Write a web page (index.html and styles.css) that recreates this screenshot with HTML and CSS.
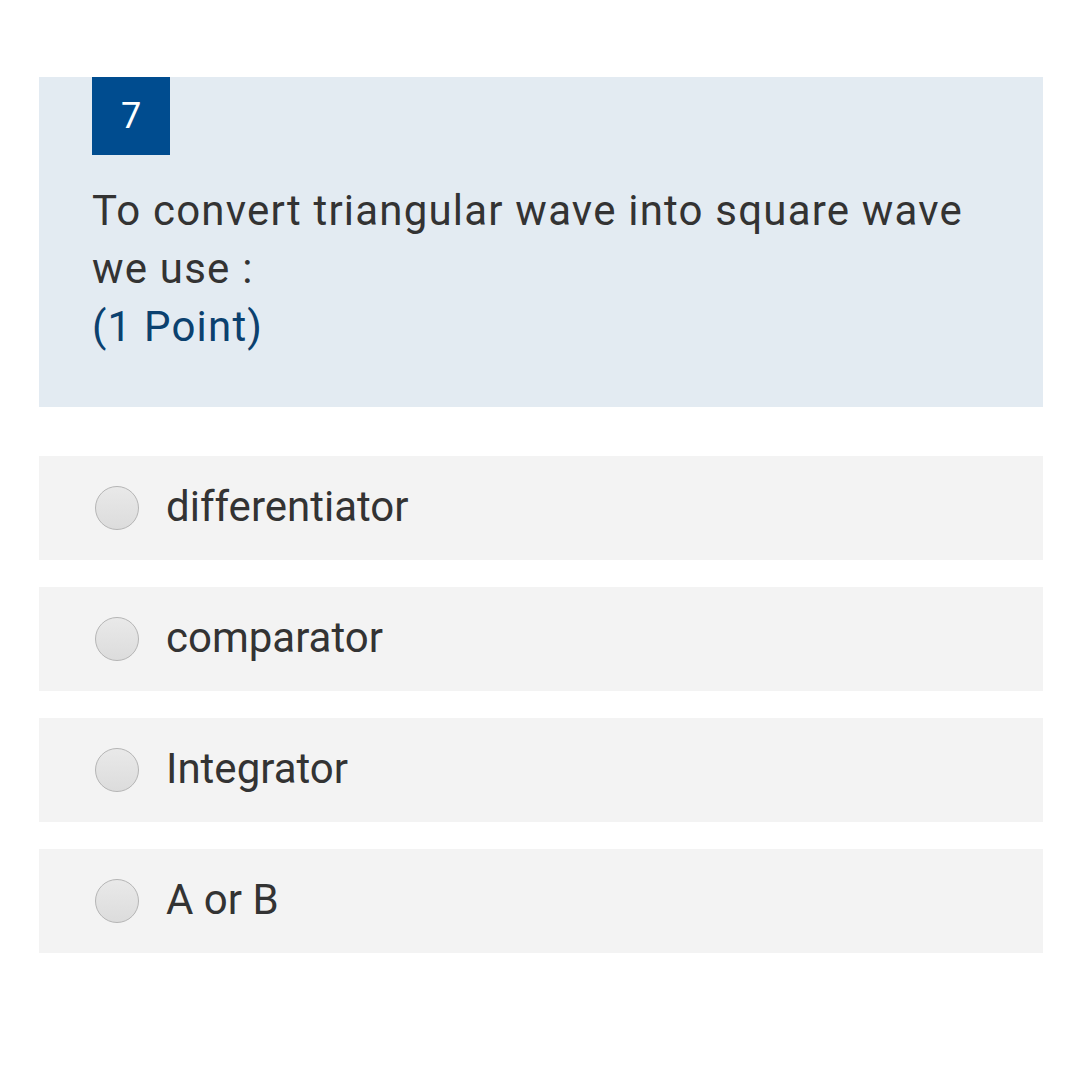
FILE: index.html
```html
<!DOCTYPE html>
<html>
<head>
<meta charset="utf-8">
<link rel="stylesheet" href="styles.css">
</head>
<body>
<div class="page">
  <div class="question">
    <div class="badge">7</div>
    <div class="qtext">To convert triangular wave into square wave we use :<br><span class="points">(1 Point)</span></div>
  </div>
  <div class="options">
    <div class="option"><span class="radio"></span><span class="label">differentiator</span></div>
    <div class="option"><span class="radio"></span><span class="label">comparator</span></div>
    <div class="option"><span class="radio"></span><span class="label">Integrator</span></div>
    <div class="option"><span class="radio"></span><span class="label">A or B</span></div>
  </div>
</div>
</body>
</html>
```
FILE: styles.css
```css
html, body { margin: 0; padding: 0; background: #ffffff; }
body { font-family: Roboto, "Noto Sans", sans-serif; color: #333333; }
.page { padding: 77px 37px 0 39px; }
.question {
  background: #e3ebf2;
  padding: 0 53px 51px 53px;
}
.badge {
  width: 78px; height: 78px;
  background: #004c8f;
  color: #ffffff;
  font-size: 36px;
  display: flex; align-items: center; justify-content: center;
}
.qtext {
  margin-top: 27px;
  font-size: 42px;
  letter-spacing: 1.2px;
  line-height: 58px;
  color: #333333;
}
.points { color: #0b416f; }
.options {
  margin-top: 49px;
  display: flex; flex-direction: column; gap: 27px;
}
.option {
  background: #f3f3f3;
  height: 104px;
  display: flex; align-items: center;
  padding-left: 56px;
}
.radio {
  width: 42px; height: 42px;
  border-radius: 50%;
  border: 1px solid #b5b5b5;
  background: linear-gradient(#e9e9e9, #dcdcdc);
  flex: none;
}
.label {
  margin-left: 27px;
  font-size: 42px;
  color: #333333;
  position: relative;
  top: -2px;
}
```
